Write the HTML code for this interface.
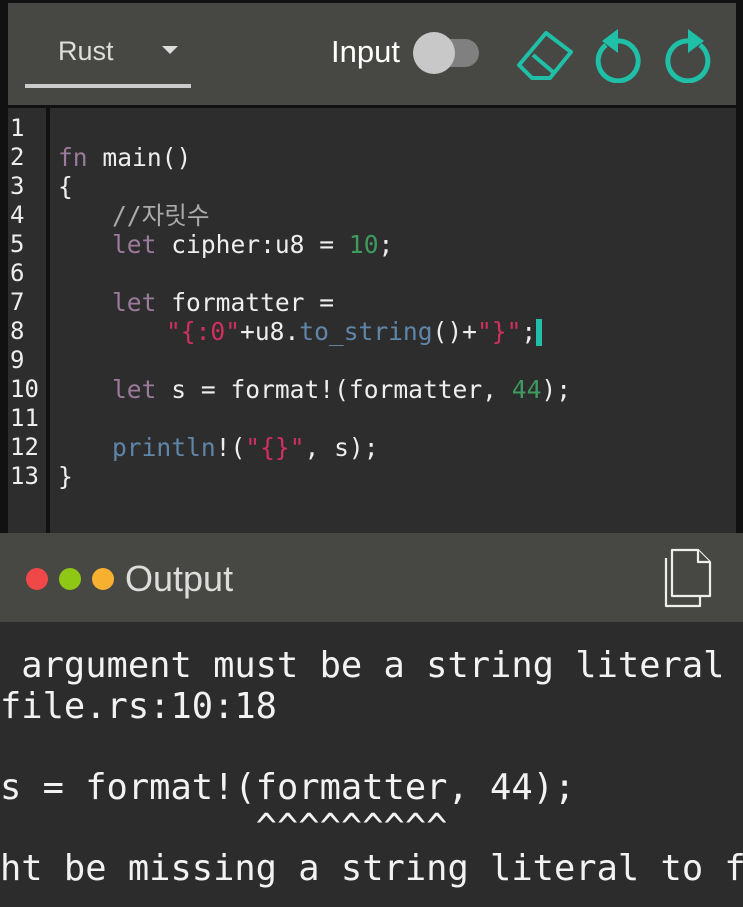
<!DOCTYPE html>
<html><head><meta charset="utf-8"><style>
*{margin:0;padding:0;box-sizing:border-box}
body{width:743px;height:907px;background:#111;position:relative;overflow:hidden;font-family:"Liberation Sans","Noto Sans CJK KR",sans-serif}
.tb{position:absolute;left:8px;top:3px;width:728px;height:102px;background:#474743}
.ed{position:absolute;left:8px;top:108px;width:728px;height:425px;background:#2d2d2d}
.gut{position:absolute;left:8px;top:108px;width:42px;height:425px;background:#2d2d2d;border-right:4px solid #111}
.code{position:absolute;top:114px;font-family:"DejaVu Sans Mono","Noto Sans CJK KR",monospace;font-size:24px;line-height:29px;color:#eee;white-space:pre}
.code2{position:absolute;top:114px;left:58px;font-family:"DejaVu Sans Mono","Noto Sans CJK KR",monospace;font-size:24.6px;line-height:29px;color:#eee}
.code2 div{height:29px;white-space:pre}
.i1{padding-left:54px}.i2{padding-left:108px}
.ob{position:absolute;left:0;top:533px;width:743px;height:89px;background:#474743}
.out{position:absolute;left:0;top:622px;width:743px;height:285px;background:#2c2c2c;font-family:"DejaVu Sans Mono",monospace;font-size:35.4px;line-height:40.6px;color:#f2f2f2;white-space:pre;padding-top:24px}
.k{color:#9b7a9b}.n{color:#3f9a60}.s{color:#d0305f}.f{color:#5f86a8}.c{color:#aaa}
</style></head><body>
<div class="tb"></div>
<div style="position:absolute;left:58px;top:36px;font-size:27px;color:#ddd">Rust</div>
<div style="position:absolute;left:162px;top:46px;width:0;height:0;border-left:8px solid transparent;border-right:8px solid transparent;border-top:8px solid #ddd"></div>
<div style="position:absolute;left:25px;top:84px;width:166px;height:4px;background:#ccc"></div>
<div style="position:absolute;left:331px;top:34px;font-size:31px;color:#fff">Input</div>
<div style="position:absolute;left:418px;top:39px;width:61px;height:28px;border-radius:14px;background:#808080"></div>
<div style="position:absolute;left:413px;top:32px;width:42px;height:42px;border-radius:50%;background:#c8c8c8"></div>
<svg style="position:absolute;left:515px;top:28px" width="60" height="55" viewBox="0 0 60 55"><g fill="none" stroke="#1fbfa8" stroke-width="4" stroke-linejoin="round"><path d="M4 37 L31 5 L56 24 L35 50 L17 50 Z"/><path d="M18 27 L38 44"/></g></svg>
<svg style="position:absolute;left:590px;top:25px" width="52" height="58" viewBox="0 0 52 58"><path d="M16 20 A20 20 0 1 0 26 16" fill="none" stroke="#1fbfa8" stroke-width="5"/><path d="M28 4 L28 28 L12 16 Z" fill="#1fbfa8"/></svg>
<svg style="position:absolute;left:664px;top:25px" width="52" height="58" viewBox="0 0 52 58"><path d="M36 20 A20 20 0 1 1 26 16" fill="none" stroke="#1fbfa8" stroke-width="5"/><path d="M24 4 L24 28 L40 16 Z" fill="#1fbfa8"/></svg>
<div class="ed"></div><div class="gut"></div>
<div class="code" style="left:10px;color:#eee">1
2
3
4
5
6
7
8
9
10
11
12
13</div>
<div class="code2"><div></div><div><span class="k">fn</span> main()</div><div>{</div><div class="i1"><span class="c">//자릿수</span></div><div class="i1"><span class="k">let</span> cipher:u8 = <span class="n">10</span>;</div><div></div><div class="i1"><span class="k">let</span> formatter =</div><div class="i2"><span class="s">"{:0"</span>+u8.<span class="f">to_string</span>()+<span class="s">"}"</span>;<span style="display:inline-block;width:6px;height:27px;background:#1fbfa8;vertical-align:-6px"></span></div><div></div><div class="i1"><span class="k">let</span> s = format!(formatter, <span class="n">44</span>);</div><div></div><div class="i1"><span class="f">println</span>!(<span class="s">"{}"</span>, s);</div><div>}</div></div>
<div class="ob"></div>
<div style="position:absolute;left:26px;top:568px;width:22px;height:22px;border-radius:50%;background:#f04848"></div>
<div style="position:absolute;left:59px;top:568px;width:22px;height:22px;border-radius:50%;background:#8fc814"></div>
<div style="position:absolute;left:92px;top:568px;width:22px;height:22px;border-radius:50%;background:#f8b030"></div>
<div style="position:absolute;left:125px;top:558px;font-size:36px;color:#ddd">Output</div>
<svg style="position:absolute;left:660px;top:546px" width="56" height="64" viewBox="0 0 56 64"><g fill="#474743" stroke="#eee" stroke-width="2.2" stroke-linejoin="round"><path d="M6 12 L6 60 L40 60 L40 14"/><path d="M12 4 L38 4 L50 16 L50 50 L12 50 Z"/><path d="M38 4 L38 16 L50 16"/></g></svg>
<div class="out"> argument must be a string literal
file.rs:10:18

s = format!(formatter, 44);
            ^^^^^^^^^
ht be missing a string literal to f</div>
</body></html>
